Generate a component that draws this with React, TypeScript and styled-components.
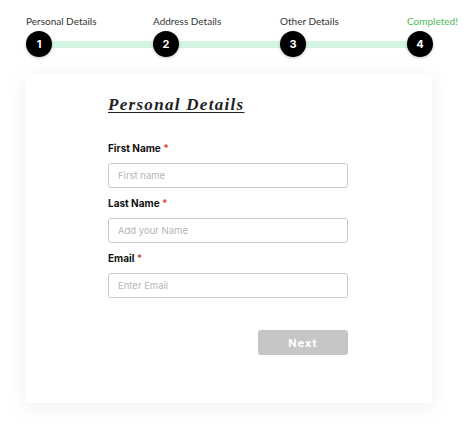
import React from 'react';
import styled, { createGlobalStyle } from 'styled-components';

const GlobalStyle = createGlobalStyle`
    body {
        margin: 0;
        background: #ffffff;
        font-family: 'Inter', 'Noto Sans', sans-serif;
    }
`;

const steps = [
    { label: 'Personal Details', done: false },
    { label: 'Address Details', done: false },
    { label: 'Other Details', done: false },
    { label: 'Completed!', done: true },
];

const fields = [
    { label: 'First Name', placeholder: 'First name', type: 'text' },
    { label: 'Last Name', placeholder: 'Add your Name', type: 'text' },
    { label: 'Email', placeholder: 'Enter Email', type: 'email' },
];

const App: React.FC = () => {
    return (
    <Page>
        <GlobalStyle />
        <Stepper>
        <LabelRow>
            {steps.map((s) => (
            <StepLabel key={s.label} $done={s.done}>{s.label}</StepLabel>
            ))}
        </LabelRow>
        <Track>
            {steps.map((s, i) => (
            <Circle key={s.label}>{i + 1}</Circle>
            ))}
        </Track>
        </Stepper>
        <Card>
        <Form onSubmit={(e) => e.preventDefault()}>
            <Title>Personal Details</Title>
            <Fields>
            {fields.map((f) => (
                <Field key={f.label}>
                <Label>
                    {f.label} <Star>*</Star>
                </Label>
                <Input type={f.type} placeholder={f.placeholder} />
                </Field>
            ))}
            </Fields>
            <Actions>
            <NextButton type="submit">Next</NextButton>
            </Actions>
        </Form>
        </Card>
    </Page>
    );
};

export default App;

const Page = styled.div`
    width: 474px;
    min-height: 426px;
    padding: 15px 0 0 26px;
    box-sizing: border-box;
`;

const Stepper = styled.div`
    width: 406px;
    display: flex;
    flex-direction: column;
    gap: 4px;
`;

const LabelRow = styled.div`
    display: grid;
    grid-template-columns: 127px 127px 127px auto;
`;

const StepLabel = styled.span<{ $done: boolean }>`
    font-family: 'Lato', 'Noto Sans', sans-serif;
    font-size: 10px;
    line-height: 12px;
    color: ${(p) => (p.$done ? '#4cb95a' : '#333')};
    white-space: nowrap;
`;

const Track = styled.div`
    display: grid;
    grid-template-columns: 127px 127px 127px auto;
    background-image: linear-gradient(#d4f5e1, #d4f5e1);
    background-size: calc(100% - 26px) 7px;
    background-position: 13px center;
    background-repeat: no-repeat;
`;

const Circle = styled.div`
    width: 26px;
    height: 26px;
    border-radius: 50%;
    background: #000;
    color: #fff;
    font-family: 'Inter', sans-serif;
    font-size: 11px;
    font-weight: 700;
    display: flex;
    align-items: center;
    justify-content: center;
    box-shadow: 0 1px 3px rgba(0, 0, 0, 0.25);
`;

const Card = styled.div`
    width: 406px;
    height: 329px;
    margin-top: 17px;
    background: #fff;
    box-shadow: 0 4px 18px rgba(0, 0, 0, 0.07);
    box-sizing: border-box;
    padding: 20px 0 0 82px;
`;

const Form = styled.form`
    width: 240px;
    display: flex;
    flex-direction: column;
`;

const Title = styled.h2`
    margin: 0;
    font-family: 'Liberation Serif', 'DejaVu Serif', serif;
    font-style: italic;
    font-weight: 700;
    font-size: 17px;
    line-height: 22px;
    letter-spacing: 1.3px;
    color: #222;
    text-decoration: underline;
    text-underline-offset: 2px;
    text-decoration-thickness: 1px;
`;

const Fields = styled.div`
    margin-top: 26px;
    display: flex;
    flex-direction: column;
    gap: 9px;
`;

const Field = styled.div`
    display: flex;
    flex-direction: column;
    gap: 9px;
`;

const Label = styled.label`
    font-size: 10px;
    line-height: 12px;
    font-weight: 700;
    color: #111;
`;

const Star = styled.span`
    color: #e0483e;
`;

const Input = styled.input`
    height: 25px;
    box-sizing: border-box;
    border: 1px solid #c9c9c9;
    border-radius: 3px;
    padding: 0 9px;
    font-family: 'Inter', sans-serif;
    font-size: 9.5px;
    color: #333;

    &::placeholder {
        color: #b5b5b5;
    }

    &:focus {
        outline: none;
        border-color: #999;
    }
`;

const Actions = styled.div`
    margin-top: 32px;
    display: flex;
    justify-content: flex-end;
`;

const NextButton = styled.button`
    width: 90px;
    height: 25px;
    border: none;
    border-radius: 3px;
    background: #c6c6c6;
    color: #fff;
    font-family: 'Inter', sans-serif;
    font-size: 11px;
    font-weight: 700;
    letter-spacing: 1px;
    cursor: pointer;
`;
